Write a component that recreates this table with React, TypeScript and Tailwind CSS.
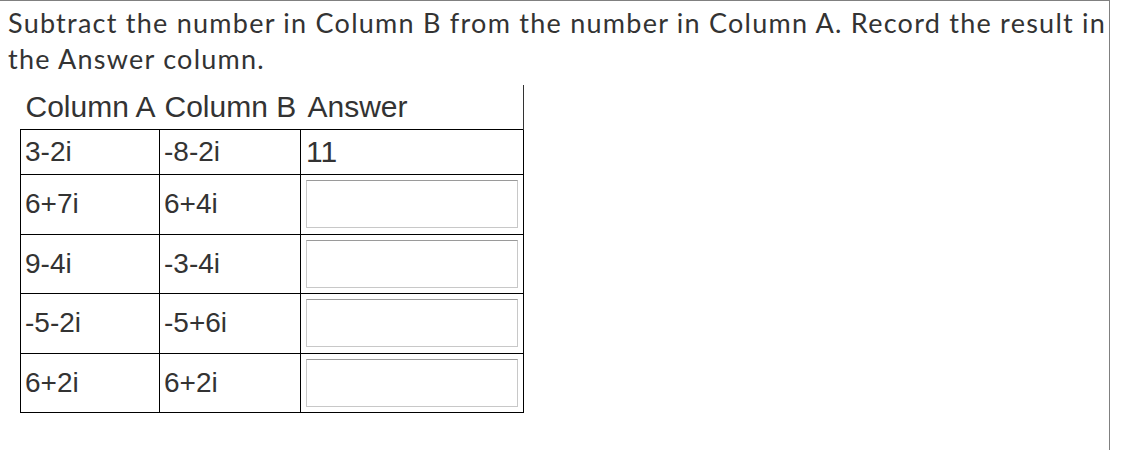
import React from "react";

const rows: { a: string; b: string; ans?: string; h: string }[] = [
  { a: "3-2i", b: "-8-2i", ans: "11", h: "h-[45px]" },
  { a: "6+7i", b: "6+4i", h: "h-[60px]" },
  { a: "9-4i", b: "-3-4i", h: "h-[59px]" },
  { a: "-5-2i", b: "-5+6i", h: "h-[60px]" },
  { a: "6+2i", b: "6+2i", h: "h-[59px]" },
];

export default function App() {
  return (
    <div className="w-[1110px] h-[450px] border-t border-r border-[#808080] bg-white overflow-hidden">
      <p
        className="pl-[8px] pt-[4px] text-[27px] leading-[36px] tracking-[1.25px] text-[#333]"
        style={{ fontFamily: "Lato, 'Noto Sans', sans-serif" }}
      >
        Subtract the number in Column B from the number in Column A. Record the result in
        <br />
        the Answer column.
      </p>
      <table
        className="ml-[20px] mt-[8px] border-collapse text-[#333]"
        style={{ fontFamily: "'Liberation Sans', Arial, sans-serif" }}
      >
        <thead>
          <tr className="h-[44px]">
            <th className="w-[139px] p-0 pl-[5px] text-left align-middle text-[30px] font-normal leading-none">
              Column A
            </th>
            <th className="w-[141px] p-0 pl-[5px] text-left align-middle text-[30px] font-normal leading-none">
              Column B
            </th>
            <th className="w-[223px] p-0 pl-[7px] text-left align-middle text-[30px] font-normal leading-none border-r border-[#333]">
              Answer
            </th>
          </tr>
        </thead>
        <tbody>
          {rows.map((r, i) => (
            <tr key={i} className={r.h}>
              <td className="border border-black px-[4px] align-middle text-[28px] leading-none">{r.a}</td>
              <td className="border border-black px-[4px] align-middle text-[28px] leading-none">{r.b}</td>
              <td className="border border-black p-[5px] align-middle">
                {r.ans ? (
                  <span className="block text-[30px] leading-none">{r.ans}</span>
                ) : (
                  <div className="h-[48px] w-[212px] border border-[#c8c8c8] border-t-[#9a9a9a] bg-white" />
                )}
              </td>
            </tr>
          ))}
        </tbody>
      </table>
    </div>
  );
}
